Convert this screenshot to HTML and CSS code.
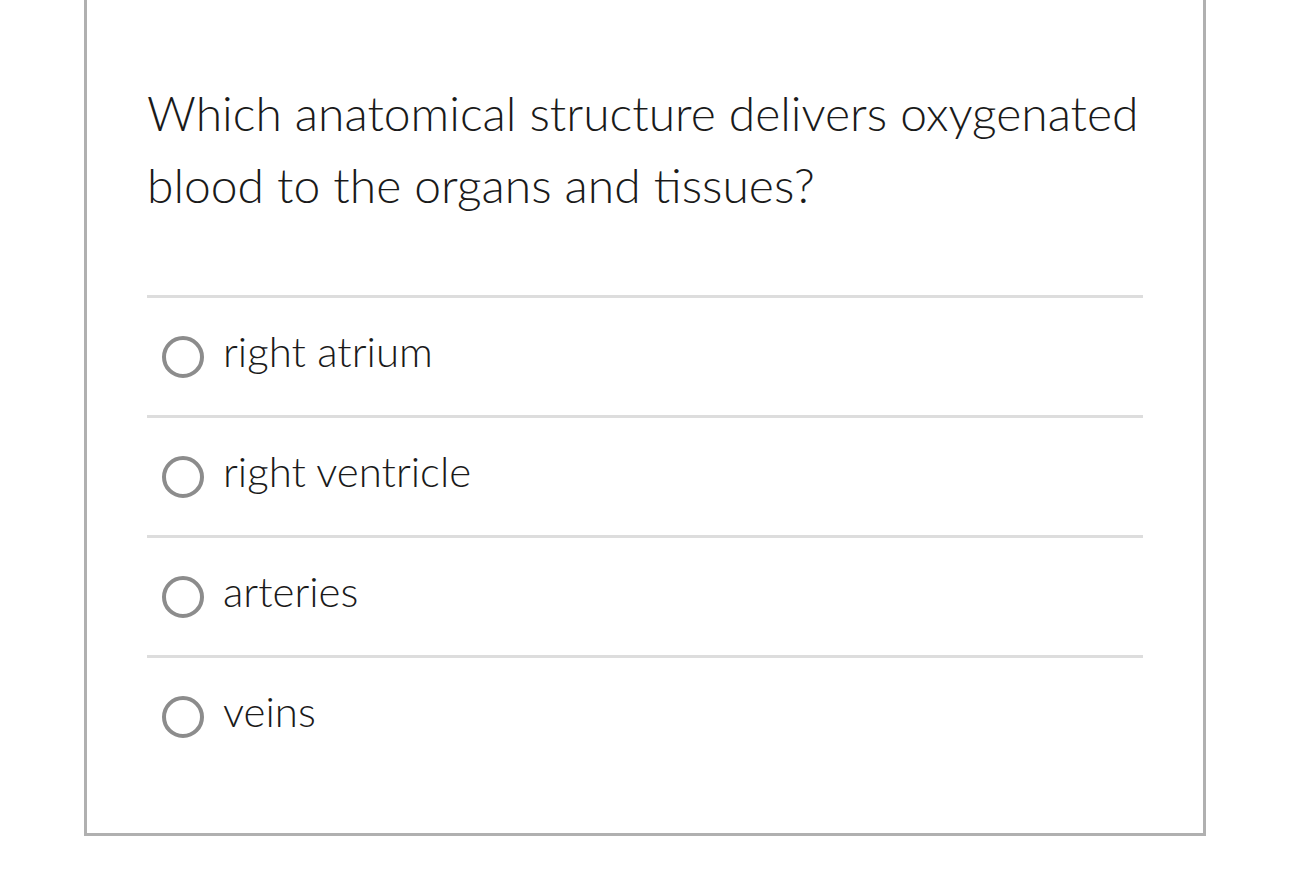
FILE: index.html
```html
<!DOCTYPE html>
<html lang="en">
<head>
<meta charset="utf-8">
<title>Question</title>
<link rel="stylesheet" href="styles.css">
</head>
<body>
<div class="card">
  <div class="question">Which anatomical structure delivers oxygenated blood to the organs and tissues?</div>
  <ul class="options">
    <li class="option"><span class="radio"></span><span class="label">right atrium</span></li>
    <li class="option"><span class="radio"></span><span class="label">right ventricle</span></li>
    <li class="option"><span class="radio"></span><span class="label">arteries</span></li>
    <li class="option"><span class="radio"></span><span class="label">veins</span></li>
  </ul>
</div>
</body>
</html>
```

FILE: styles.css
```css
html, body {
  margin: 0;
  padding: 0;
  background: #ffffff;
}
body {
  font-family: Lato, "Open Sans", sans-serif;
  color: #1a1a1a;
}
.card {
  box-sizing: border-box;
  margin-left: 84px;
  width: 1122px;
  border: 3px solid #b0b0b0;
  border-top: none;
  padding: 77px 60px 58px 60px;
}
.question {
  font-size: 48px;
  font-weight: 300;
  line-height: 72px;
  margin-bottom: 74px;
}
.options {
  list-style: none;
  margin: 0;
  padding: 0;
}
.option {
  display: flex;
  align-items: center;
  height: 117px;
  border-top: 3px solid #dddddd;
  padding-left: 15px;
}
.radio {
  box-sizing: border-box;
  width: 42px;
  height: 42px;
  border: 4px solid #8c8c8c;
  border-radius: 50%;
  flex: none;
  margin-right: 19px;
  margin-top: 1px;
}
.label {
  font-size: 42px;
  font-weight: 300;
  line-height: 1;
  margin-bottom: 12px;
}
```
